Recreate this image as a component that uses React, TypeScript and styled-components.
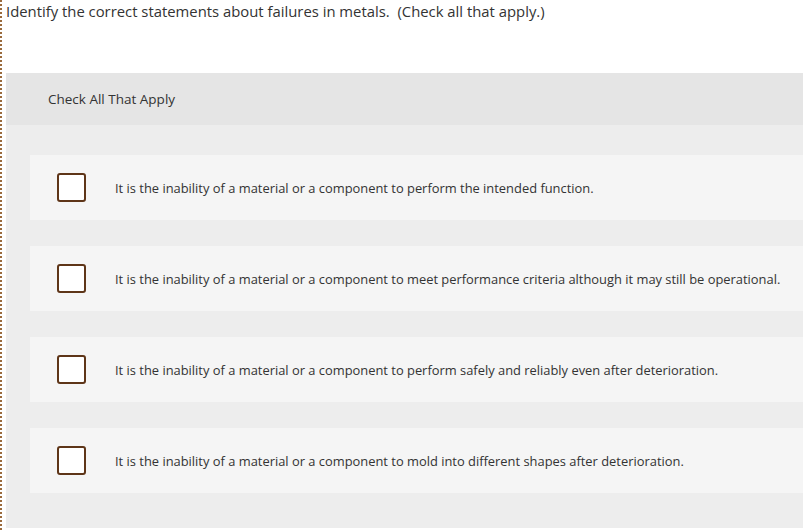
import styled, { createGlobalStyle } from "styled-components";

const GlobalStyle = createGlobalStyle`
  html, body {
    margin: 0;
    padding: 0;
    background: #ffffff;
  }
  body {
    font-family: "Open Sans", "Liberation Sans", sans-serif;
    color: #2b2b2b;
  }
`;

const options = [
  "It is the inability of a material or a component to perform the intended function.",
  "It is the inability of a material or a component to meet performance criteria although it may still be operational.",
  "It is the inability of a material or a component to perform safely and reliably even after deterioration.",
  "It is the inability of a material or a component to mold into different shapes after deterioration.",
];

const App = () => {
  return (
    <>
      <GlobalStyle />
      <Page>
        <Question>
          Identify the correct statements about failures in metals.&nbsp; (Check all that apply.)
        </Question>
        <Panel>
          <PanelHeader>Check All That Apply</PanelHeader>
          <OptionList>
            {options.map((text) => (
              <Option key={text}>
                <Checkbox type="button" aria-label="select" />
                <OptionText>{text}</OptionText>
              </Option>
            ))}
          </OptionList>
        </Panel>
      </Page>
    </>
  );
};

const Page = styled.div`
  min-height: 530px;
  box-sizing: border-box;
  border-left: 2px dotted #9a6a3c;
  padding-left: 4px;
`;

const Question = styled.p`
  margin: 0;
  padding-top: 1px;
  font-size: 14.85px;
  line-height: 20px;
  color: #333333;
`;

const Panel = styled.div`
  margin-top: 52px;
  background-color: #ededed;
  padding-bottom: 35px;
`;

const PanelHeader = styled.div`
  display: flex;
  align-items: center;
  height: 52px;
  padding-left: 42px;
  background-color: #e5e5e5;
  font-size: 13.5px;
  color: #333333;
`;

const OptionList = styled.div`
  display: flex;
  flex-direction: column;
  gap: 26px;
  padding: 30px 0 0 24px;
`;

const Option = styled.div`
  display: flex;
  align-items: center;
  height: 65px;
  padding-left: 27px;
  background-color: #f5f5f5;
`;

const Checkbox = styled.button`
  flex: none;
  width: 29px;
  height: 29px;
  padding: 0;
  box-sizing: border-box;
  border: 2px solid #5e3518;
  border-radius: 3px;
  background-color: #ffffff;
  cursor: pointer;
`;

const OptionText = styled.span`
  margin-left: 29px;
  font-size: 12.9px;
  color: #333333;
`;

export default App;
